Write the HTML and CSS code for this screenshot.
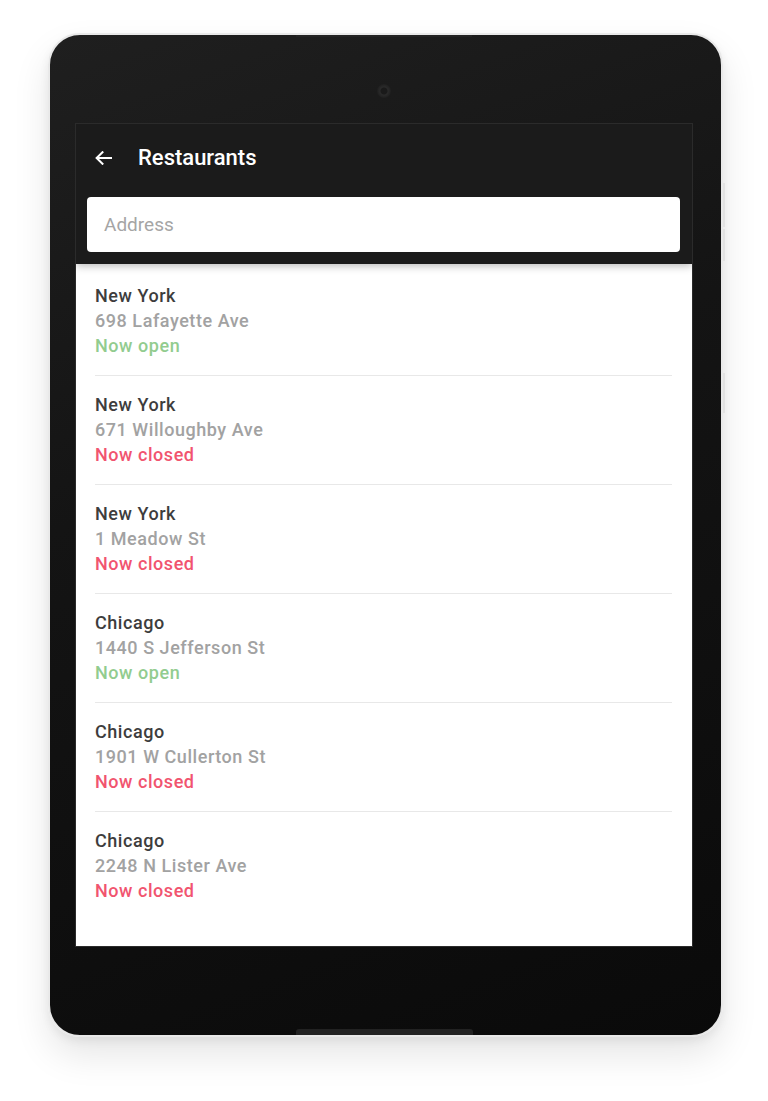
FILE: index.html
```html
<!DOCTYPE html>
<html lang="en">
<head>
<meta charset="utf-8">
<title>Restaurants</title>
<link rel="stylesheet" href="styles.css">
</head>
<body>
<div class="device">
  <div class="bezel-top">
    <div class="top-strip"></div>
    <div class="camera"></div>
  </div>
  <div class="screen">
    <header class="appbar">
      <div class="toolbar">
        <svg class="back" width="17" height="14" viewBox="0 0 17 14" aria-hidden="true">
          <path d="M16 7H2M7.5 1.2L1.6 7l5.9 5.8" fill="none" stroke="#fff" stroke-width="2" stroke-linecap="square"/>
        </svg>
        <h1 class="title">Restaurants</h1>
      </div>
      <div class="search"><span class="placeholder">Address</span></div>
    </header>
    <ul class="list">
      <li class="item"><div class="city">New York</div><div class="addr">698 Lafayette Ave</div><div class="status open">Now open</div></li>
      <li class="item"><div class="city">New York</div><div class="addr">671 Willoughby Ave</div><div class="status closed">Now closed</div></li>
      <li class="item"><div class="city">New York</div><div class="addr">1 Meadow St</div><div class="status closed">Now closed</div></li>
      <li class="item"><div class="city">Chicago</div><div class="addr">1440 S Jefferson St</div><div class="status open">Now open</div></li>
      <li class="item"><div class="city">Chicago</div><div class="addr">1901 W Cullerton St</div><div class="status closed">Now closed</div></li>
      <li class="item last"><div class="city">Chicago</div><div class="addr">2248 N Lister Ave</div><div class="status closed">Now closed</div></li>
    </ul>
  </div>
  <div class="bezel-bottom">
    <div class="bottom-bar"></div>
  </div>
  <div class="side-btn b1"></div>
  <div class="side-btn b2"></div>
  <div class="side-btn b3"></div>
</div>
</body>
</html>
```
FILE: styles.css
```css
html, body {
  margin: 0;
  padding: 0;
  background: #ffffff;
}
body {
  width: 768px;
  height: 1101px;
  overflow: hidden;
  font-family: Roboto, "Noto Sans", Arial, sans-serif;
}
.device {
  position: relative;
  box-sizing: border-box;
  width: 675px;
  height: 1004px;
  margin: 33px 0 0 48px;
  border: 2px solid #e9e9e9;
  border-radius: 32px;
  background: linear-gradient(160deg, #1f1f1f 0%, #141414 40%, #0a0a0a 100%);
  box-shadow: 0 18px 36px rgba(0, 0, 0, 0.10), 0 4px 10px rgba(0, 0, 0, 0.06);
  display: flex;
  flex-direction: column;
  padding: 0 29px 0 26px;
}
.bezel-top {
  height: 89px;
  position: relative;
  display: flex;
  flex-direction: column;
  align-items: center;
}
.top-strip {
  width: 176px;
  height: 2px;
  background: #232323;
}
.camera {
  margin-top: 47px;
  width: 14px;
  height: 14px;
  border-radius: 50%;
  background: radial-gradient(circle, #1a1a1a 0 3px, #2a2a2a 4px, #1f1f1f 7px);
}
.screen {
  width: 616px;
  height: 822px;
  display: flex;
  flex-direction: column;
  background: #fff;
  box-shadow: 0 0 0 1px #2b2b2b;
  overflow: hidden;
}
.appbar {
  background: #1b1b1b;
  padding: 0 12px 12px 11px;
  box-shadow: 0 2px 8px rgba(0, 0, 0, 0.28);
  position: relative;
  z-index: 1;
}
.toolbar {
  height: 66px;
  display: flex;
  align-items: center;
  padding-left: 8px;
}
.back {
  display: block;
  margin-right: 26px;
  margin-top: 2px;
}
.title {
  margin: 0;
  color: #ffffff;
  font-size: 22px;
  font-weight: 500;
}
.search {
  margin-top: 7px;
  height: 55px;
  background: #fff;
  border-radius: 4px;
  display: flex;
  align-items: center;
  padding-left: 17px;
}
.placeholder {
  font-size: 19px;
  color: #a5a5a5;
}
.list {
  list-style: none;
  margin: 0;
  padding: 3px 20px 0 19px;
  flex: 1;
}
.item {
  padding: 16px 0 17px;
  border-bottom: 1.5px solid #e8e8e8;
  font-size: 18px;
  line-height: 25px;
  letter-spacing: 0.55px;
}
.item.last {
  border-bottom: none;
}
.city {
  color: #3d3d3d;
  font-weight: 500;
}
.addr {
  color: #a2a2a2;
  font-weight: 500;
}
.status {
  font-weight: 500;
}
.open { color: #92cc8f; }
.closed { color: #f1546f; }
.bezel-bottom {
  height: 89px;
  display: flex;
  align-items: flex-end;
  justify-content: center;
}
.bottom-bar {
  width: 177px;
  height: 6px;
  background: #222;
  border-radius: 3px 3px 0 0;
}
.side-btn {
  position: absolute;
  right: -4px;
  width: 2px;
  background: #e2e2e2;
}
.b1 { top: 148px; height: 44px; }
.b2 { top: 194px; height: 32px; }
.b3 { top: 338px; height: 40px; }
```
